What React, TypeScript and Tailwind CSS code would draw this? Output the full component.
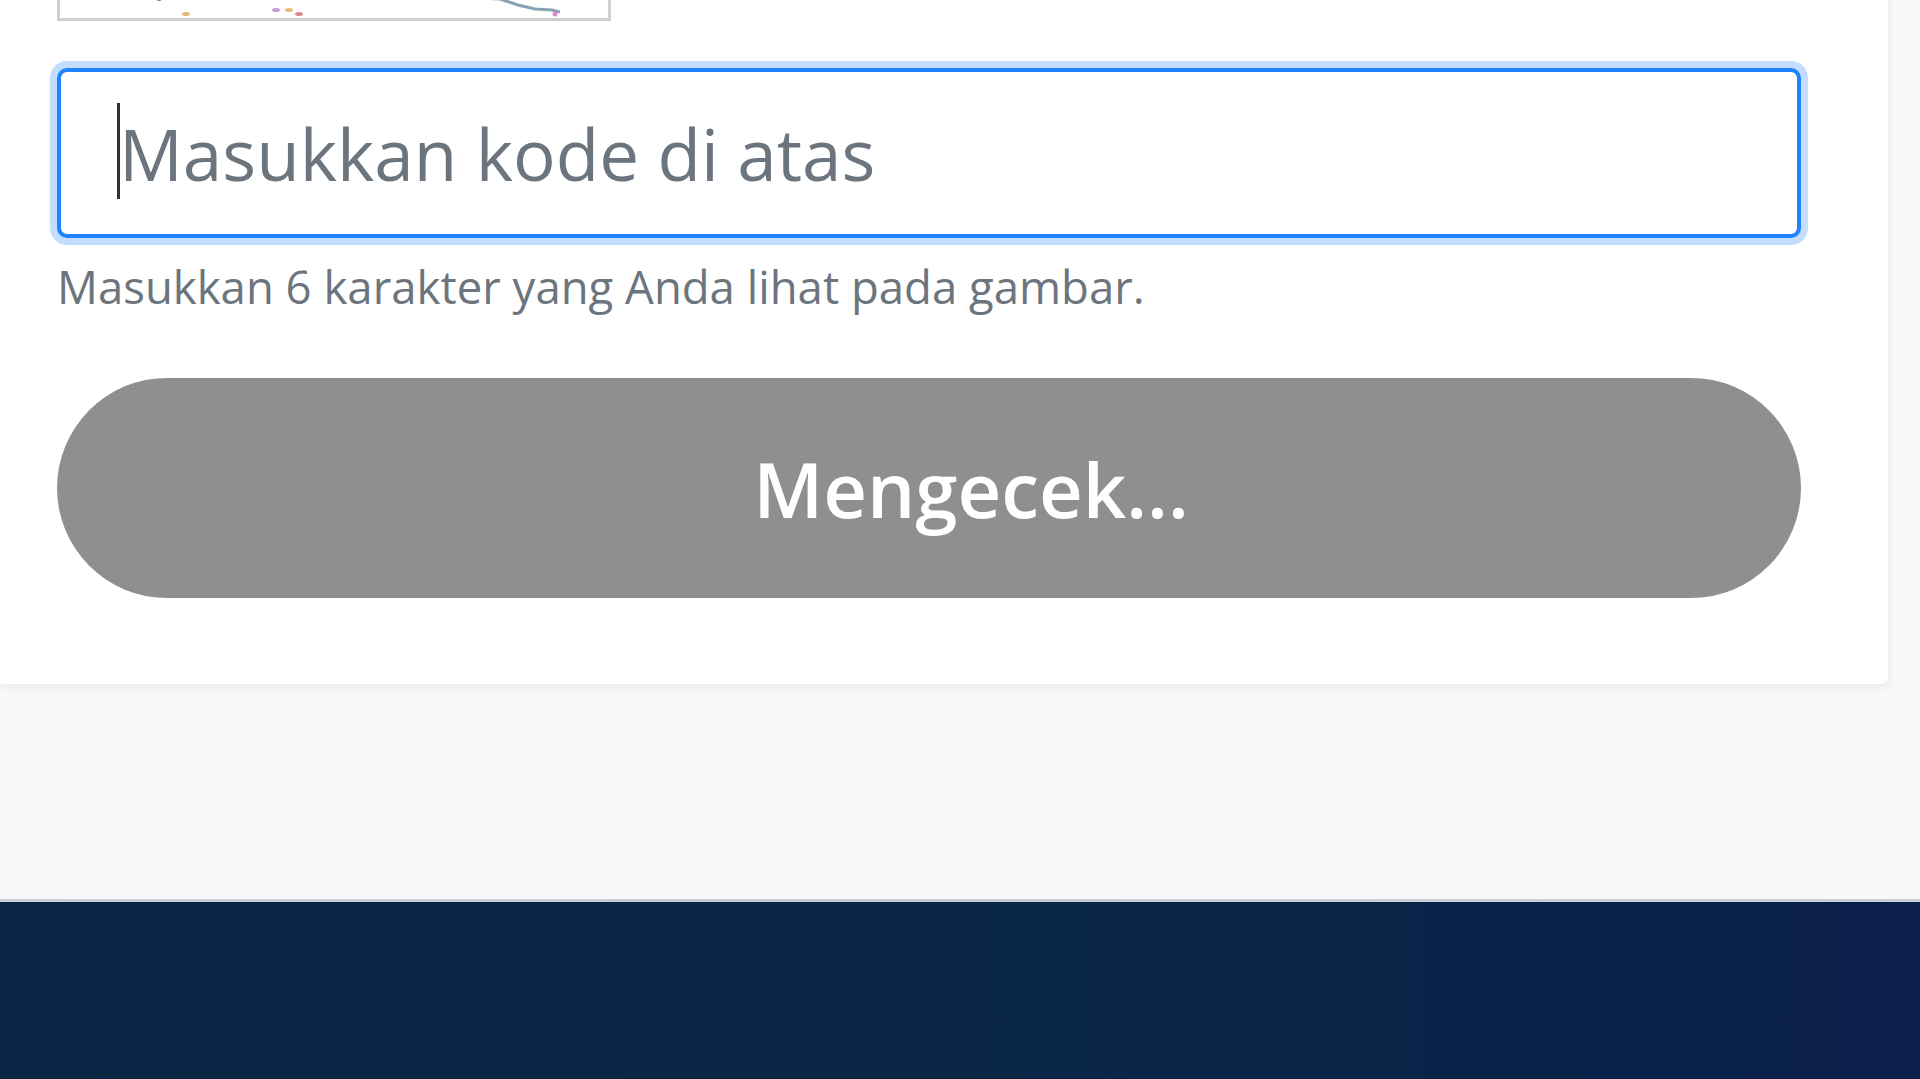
function CaptchaImage() {
  // only the bottom strip of the captcha picture is still on screen
  return (
    <div className="h-[150px] w-[554px] border-[3px] border-[#cfcfcf] bg-white overflow-hidden">
      <svg width="548" height="144" viewBox="0 0 548 144" className="block">
        <circle cx="99" cy="124" r="3" fill="#5f8f5a" />
        <ellipse cx="126" cy="140" rx="4" ry="2" fill="#e5b87a" />
        <ellipse cx="216" cy="136" rx="4" ry="2" fill="#c99ad9" />
        <ellipse cx="229" cy="136" rx="4" ry="2" fill="#e9b97c" />
        <ellipse cx="239" cy="140" rx="4" ry="2" fill="#d98a8a" />
        <path d="M418 124 L 440 125 L 458 131 L 475 135 L 492 136 L 500 138" stroke="#8aa3b4" strokeWidth="3" fill="none" />
        <circle cx="495" cy="140" r="2.5" fill="#d58ad1" />
      </svg>
    </div>
  );
}

export default function App() {
  return (
    <div
      className="min-h-screen bg-[#f7f8fa] flex flex-col overflow-hidden"
      style={{ fontFamily: '"Open Sans", "Noto Sans", sans-serif' }}
    >
      <div className="-mt-[129px] w-[1888px] bg-white rounded-br-md shadow-[0_2px_8px_rgba(0,0,0,0.08)] pl-[57px] pr-[87px] pb-[86px]">
        <CaptchaImage />

        <div className="relative mt-[47px]">
          <input
            type="text"
            placeholder="Masukkan kode di atas"
            className="block w-full h-[170px] rounded-[10px] border-[4px] border-[#1f84fb] bg-white pl-[58px] pr-6 text-[71px] text-[#495057] placeholder:text-[#6c757d] outline-none shadow-[0_0_0_7px_#c2ddfd] caret-transparent"
          />
          {/* text cursor of the focused field */}
          <span className="absolute left-[60px] top-[35px] h-[96px] w-[3px] bg-[#333]" />
        </div>
        <p className="mt-[14px] text-[45.5px] leading-[1.5] text-[#6c757d]">
          Masukkan 6 karakter yang Anda lihat pada gambar.
        </p>

        <button
          type="button"
          disabled
          className="mt-[58px] w-full h-[220px] rounded-full bg-[#8f8f8f] text-white text-[76px] font-semibold flex items-center justify-center pl-[84px] pt-[2px]"
        >
          Mengecek...
        </button>
      </div>

      <footer className="mt-[215px] flex-1 min-h-[200px] border-t-[3px] border-[#c9ced6] bg-linear-to-r from-[#0b2443] via-[#0a2846] to-[#0a1f4a]" />
    </div>
  );
}
